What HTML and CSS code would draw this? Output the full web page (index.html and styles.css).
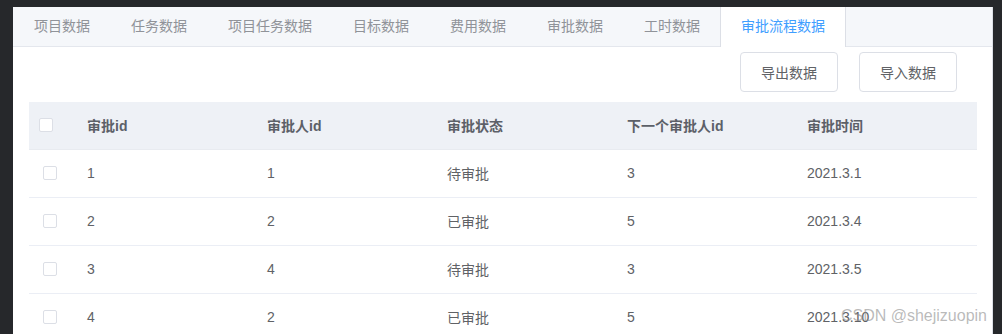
FILE: index.html
```html
<!DOCTYPE html>
<html lang="en">
<head>
    <meta charset="UTF-8">
    <meta name="viewport" content="width=device-width, initial-scale=1.0">
    <title>审批流程数据</title>
    <link rel="stylesheet" href="styles.css">
</head>
<body>
    <div class="panel">
        <div class="tabs">
            <div class="tab">项目数据</div>
            <div class="tab">任务数据</div>
            <div class="tab">项目任务数据</div>
            <div class="tab">目标数据</div>
            <div class="tab">费用数据</div>
            <div class="tab">审批数据</div>
            <div class="tab">工时数据</div>
            <div class="tab active">审批流程数据</div>
        </div>
        <div class="content">
            <div class="toolbar">
                <button class="btn">导出数据</button>
                <button class="btn">导入数据</button>
            </div>
            <table class="data-table">
                <thead>
                    <tr>
                        <th class="col-check"><span class="checkbox head-check"></span></th>
                        <th>审批id</th>
                        <th>审批人id</th>
                        <th>审批状态</th>
                        <th>下一个审批人id</th>
                        <th>审批时间</th>
                    </tr>
                </thead>
                <tbody>
                    <tr>
                        <td class="col-check"><span class="checkbox"></span></td>
                        <td>1</td><td>1</td><td>待审批</td><td>3</td><td>2021.3.1</td>
                    </tr>
                    <tr>
                        <td class="col-check"><span class="checkbox"></span></td>
                        <td>2</td><td>2</td><td>已审批</td><td>5</td><td>2021.3.4</td>
                    </tr>
                    <tr>
                        <td class="col-check"><span class="checkbox"></span></td>
                        <td>3</td><td>4</td><td>待审批</td><td>3</td><td>2021.3.5</td>
                    </tr>
                    <tr>
                        <td class="col-check"><span class="checkbox"></span></td>
                        <td>4</td><td>2</td><td>已审批</td><td>5</td><td>2021.3.10</td>
                    </tr>
                </tbody>
            </table>
        </div>
        <div class="watermark">CSDN @shejizuopin</div>
    </div>
</body>
</html>
```

FILE: styles.css
```css
* {
    margin: 0;
    padding: 0;
    box-sizing: border-box;
}

body {
    background-color: #26282b;
    height: 334px;
    overflow: hidden;
    font-family: "Liberation Sans", "Noto Sans CJK SC", sans-serif;
    font-size: 14px;
    color: #606266;
}

.panel {
    position: relative;
    margin: 7px 0 0 13px;
    width: 980px;
    height: 327px;
    background-color: #fff;
    border-right: 1px solid #dcdfe6;
}

.tabs {
    display: flex;
    height: 40px;
    background-color: #f5f7fa;
    border-bottom: 1px solid #e4e7ed;
}

.tab {
    height: 40px;
    line-height: 39px;
    padding: 0 20px;
    border-left: 1px solid transparent;
    border-right: 1px solid transparent;
    color: #909399;
    white-space: nowrap;
}

.tab + .tab {
    margin-left: -1px;
}

.tab.active {
    background-color: #fff;
    color: #409eff;
    border-left-color: #dcdfe6;
    border-right-color: #dcdfe6;
}

.content {
    padding: 5px 15px 0 16px;
}

.toolbar {
    display: flex;
    justify-content: flex-end;
    gap: 21px;
    padding-right: 20px;
    margin-bottom: 10px;
}

.btn {
    width: 98px;
    height: 40px;
    background-color: #fff;
    border: 1px solid #dcdfe6;
    border-radius: 4px;
    font-family: inherit;
    font-size: 14px;
    color: #606266;
    cursor: pointer;
}

.data-table {
    width: 948px;
    border-collapse: collapse;
    table-layout: fixed;
}

.data-table th,
.data-table td {
    width: 180px;
    height: 48px;
    padding: 0 10px;
    text-align: left;
    vertical-align: middle;
    border-bottom: 1px solid #ebeef5;
}

.data-table th {
    height: 47px;
    background-color: #eef1f6;
    font-weight: bold;
    color: #5c6068;
    border-bottom-color: #e8ebf0;
}

.data-table .col-check {
    width: 48px;
    padding: 0 0 0 14px;
}

.data-table th.col-check {
    padding-left: 10px;
}

.checkbox {
    display: block;
    width: 14px;
    height: 14px;
    background-color: #fff;
    border: 1px solid #dcdfe6;
    border-radius: 2px;
}

.head-check {
    margin-top: -1px;
}

.watermark {
    position: absolute;
    right: 5px;
    top: 300px;
    font-size: 16px;
    color: rgba(140, 140, 140, 0.6);
    white-space: nowrap;
}
```
